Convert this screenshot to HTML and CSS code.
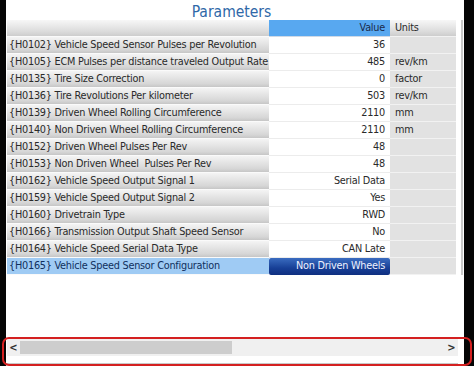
FILE: index.html
```html
<!DOCTYPE html>
<html lang="en">
<head>
    <meta charset="UTF-8">
    <meta name="viewport" content="width=device-width, initial-scale=1.0">
    <link rel="stylesheet" href="styles.css">
</head>
<body>
    <div class="frame">
        <div class="panel">
            <div class="title">Parameters</div>
            <div class="grid">
                <div class="row head">
                    <div class="name"></div>
                    <div class="value">Value</div>
                    <div class="units">Units</div>
                </div>
                <div class="row"><div class="name">{H0102} Vehicle Speed Sensor Pulses per Revolution</div><div class="value">36</div><div class="units"></div></div>
                <div class="row"><div class="name">{H0105} ECM Pulses per distance traveled Output Rate</div><div class="value">485</div><div class="units">rev/km</div></div>
                <div class="row"><div class="name">{H0135} Tire Size Correction</div><div class="value">0</div><div class="units">factor</div></div>
                <div class="row"><div class="name">{H0136} Tire Revolutions Per kilometer</div><div class="value">503</div><div class="units">rev/km</div></div>
                <div class="row"><div class="name">{H0139} Driven Wheel Rolling Circumference</div><div class="value">2110</div><div class="units">mm</div></div>
                <div class="row"><div class="name">{H0140} Non Driven Wheel Rolling Circumference</div><div class="value">2110</div><div class="units">mm</div></div>
                <div class="row"><div class="name">{H0152} Driven Wheel Pulses Per Rev</div><div class="value">48</div><div class="units"></div></div>
                <div class="row"><div class="name">{H0153} Non Driven Wheel&nbsp; Pulses Per Rev</div><div class="value">48</div><div class="units"></div></div>
                <div class="row"><div class="name">{H0162} Vehicle Speed Output Signal 1</div><div class="value">Serial Data</div><div class="units"></div></div>
                <div class="row"><div class="name">{H0159} Vehicle Speed Output Signal 2</div><div class="value">Yes</div><div class="units"></div></div>
                <div class="row"><div class="name">{H0160} Drivetrain Type</div><div class="value">RWD</div><div class="units"></div></div>
                <div class="row"><div class="name">{H0166} Transmission Output Shaft Speed Sensor</div><div class="value">No</div><div class="units"></div></div>
                <div class="row"><div class="name">{H0164} Vehicle Speed Serial Data Type</div><div class="value">CAN Late</div><div class="units"></div></div>
                <div class="row selected"><div class="name">{H0165} Vehicle Speed Sensor Configuration</div><div class="value">Non Driven Wheels</div><div class="units"></div></div>
            </div>
            <div class="scrollbar">
                <span class="arrow">&lt;</span>
                <div class="track"><div class="thumb"></div></div>
                <span class="arrow">&gt;</span>
            </div>
            <div class="bottom-line"></div>
        </div>
        <div class="highlight"></div>
    </div>
</body>
</html>
```

FILE: styles.css
```css
body {
  margin: 0;
  background-color: #000;
  font-family: "DejaVu Sans Condensed", "DejaVu Sans", sans-serif;
}
.frame {
  position: relative;
  width: 474px;
  height: 366px;
  padding: 0 10px 0 6px;
  box-sizing: border-box;
  background-color: #050505;
}
.panel {
  height: 366px;
  background-color: #fff;
  display: flex;
  flex-direction: column;
  padding-left: 1px;
}
.title {
  height: 20px;
  line-height: 24px;
  text-align: center;
  font-size: 15.5px;
  color: #2f68a8;
  padding-right: 8px;
}
.grid {
  width: 449px;
  border-right: 2px solid #c9c9c9;
  padding-right: 5px;
}
.row {
  display: flex;
  height: 17px;
  font-size: 10.8px;
  letter-spacing: -0.24px;
  line-height: 16px;
  color: #2a2a2a;
}
.row .name {
  width: 262px;
  padding-left: 2px;
  background: linear-gradient(#f4f4f4, #d6d6d6 80%, #c6c6c6);
  border-bottom: 1px solid #fafafa;
  white-space: nowrap;
  overflow: hidden;
  box-sizing: border-box;
}
.row .value {
  width: 121px;
  padding-right: 5px;
  text-align: right;
  background-color: #fff;
  border-bottom: 1px solid #ececec;
  box-sizing: border-box;
  white-space: nowrap;
}
.row .units {
  flex: 1;
  padding-left: 5px;
  background-color: #e2e2e2;
  border-bottom: 1px solid #f2f2f2;
  box-sizing: border-box;
}
.row.head .name,
.row.head .units {
  background: linear-gradient(#f7f7f7, #dcdcdc 70%, #cdcdcd);
}
.row.head .value {
  background-color: #58a8f0;
  color: #1a2a4a;
  border-bottom: 1px solid #cfd9e6;
}
.row.selected .name {
  background-color: #9fcbf4;
  background-image: none;
  color: #10305e;
}
.row.selected .value {
  background: linear-gradient(#3a6cc0, #173f96 60%, #0f2f80);
  color: #eef2ff;
  border-radius: 2px;
  border-bottom: none;
}
.scrollbar {
  margin-top: auto;
  margin-bottom: 7px;
  width: 451px;
  height: 18px;
  display: flex;
  align-items: center;
  background-color: #f0f0f0;
  font-size: 11px;
  color: #333;
}
.arrow {
  width: 13px;
  text-align: center;
  font-weight: bold;
}
.track {
  flex: 1;
  height: 13px;
}
.thumb {
  width: 212px;
  height: 13px;
  background-color: #cdcdcd;
}
.bottom-line {
  height: 1px;
  width: 451px;
  margin-bottom: 2px;
  background-color: #c8c8c8;
}
.highlight {
  position: absolute;
  left: 2px;
  top: 337px;
  width: 466px;
  height: 25px;
  border: 2px solid #d42020;
  border-radius: 7px;
}
```
